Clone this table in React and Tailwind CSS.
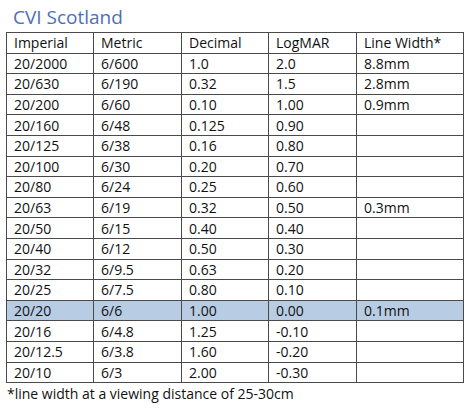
const rows = [
  ['20/2000', '6/600', '1.0', '2.0', '8.8mm'],
  ['20/630', '6/190', '0.32', '1.5', '2.8mm'],
  ['20/200', '6/60', '0.10', '1.00', '0.9mm'],
  ['20/160', '6/48', '0.125', '0.90', ''],
  ['20/125', '6/38', '0.16', '0.80', ''],
  ['20/100', '6/30', '0.20', '0.70', ''],
  ['20/80', '6/24', '0.25', '0.60', ''],
  ['20/63', '6/19', '0.32', '0.50', '0.3mm'],
  ['20/50', '6/15', '0.40', '0.40', ''],
  ['20/40', '6/12', '0.50', '0.30', ''],
  ['20/32', '6/9.5', '0.63', '0.20', ''],
  ['20/25', '6/7.5', '0.80', '0.10', ''],
  ['20/20', '6/6', '1.00', '0.00', '0.1mm'],
  ['20/16', '6/4.8', '1.25', '-0.10', ''],
  ['20/12.5', '6/3.8', '1.60', '-0.20', ''],
  ['20/10', '6/3', '2.00', '-0.30', ''],
];

const headers = ['Imperial', 'Metric', 'Decimal', 'LogMAR', 'Line Width*'];
const widths = ['w-[87px]', 'w-[88px]', 'w-[87px]', 'w-[88px]', 'w-[107px]'];

export default function App() {
  return (
    <div className="w-[474px] h-[409px] bg-white overflow-hidden text-[#111]" style={{ fontFamily: '"Open Sans", sans-serif' }}>
      {/* title */}
      <div className="h-[32px] pt-[4px] pl-[13px] text-[19px] leading-[26px] text-[#4d6fb3]">CVI Scotland</div>

      <table className="ml-[6px] w-[457px] table-fixed border-collapse border-[1.5px] border-[#4a4a4a] text-[14px] leading-[19px]">
        <colgroup>
          {widths.map((w, i) => (
            <col key={i} className={w} />
          ))}
        </colgroup>
        <thead>
          <tr className="h-[20.6px]">
            {headers.map((h) => (
              <th key={h} className="border-[1.5px] border-[#4a4a4a] px-[7px] py-0 text-left font-normal">
                {h}
              </th>
            ))}
          </tr>
        </thead>
        <tbody>
          {rows.map((r) => (
            <tr key={r[0]} className={r[0] === '20/20' ? 'h-[20.6px] bg-[#b8cce4]' : 'h-[20.6px]'}>
              {r.map((c, i) => (
                <td key={i} className="border-[1.5px] border-[#4a4a4a] px-[7px] py-0">
                  {c}
                </td>
              ))}
            </tr>
          ))}
        </tbody>
      </table>

      <div className="pl-[7px] pt-[1px] text-[14px] leading-[19px]">*line width at a viewing distance of 25-30cm</div>
    </div>
  );
}
